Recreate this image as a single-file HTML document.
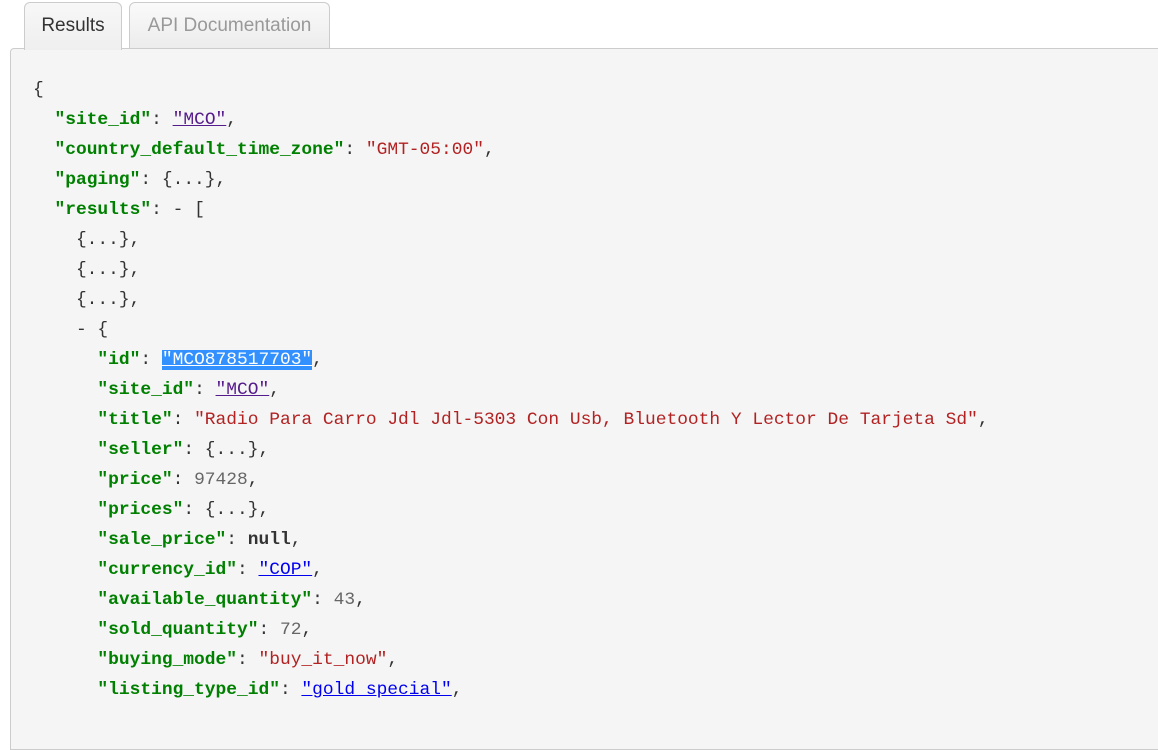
<!DOCTYPE html>
<html><head><meta charset="utf-8"><style>
body{margin:0;background:#fff;width:1158px;height:708px;overflow:hidden;font-family:"Liberation Sans",sans-serif}
.tab{position:absolute;top:2px;height:46px;border:1px solid #ccc;border-bottom:none;border-radius:6px 6px 0 0;font-size:19px;line-height:46px;text-align:center;box-sizing:border-box}
.t1{left:24px;width:98px;background:linear-gradient(#f7f7f7,#efefef);color:#333;z-index:2;height:48px}
.t2{left:129px;width:201px;background:linear-gradient(#fafafa,#ececec);color:#999}
.box{position:absolute;left:10px;top:48px;width:1160px;height:700px;background:#f5f5f5;border:1px solid #ccc;border-radius:4px 0 0 0}
pre{position:absolute;left:33px;top:75px;margin:0;font-family:"Liberation Mono",monospace;font-size:17.9px;line-height:30px;color:#333}
.k{color:#008000;font-weight:bold}
.s{color:#b22222}
.l{color:#551a8b;text-decoration:underline}
.b{color:#0000ee;text-decoration:underline}
.n{color:#666}
.h{background:#3390ff;color:#fff;text-decoration:underline}
.nl{color:#333;font-weight:bold}
</style></head><body>
<div class="tab t1">Results</div>
<div class="tab t2">API Documentation</div>
<div class="box"></div>
<pre>{
  <span class="k">"site_id"</span>: <span class="l">"MCO"</span>,
  <span class="k">"country_default_time_zone"</span>: <span class="s">"GMT-05:00"</span>,
  <span class="k">"paging"</span>: {...},
  <span class="k">"results"</span>: - [
    {...},
    {...},
    {...},
    - {
      <span class="k">"id"</span>: <span class="h">"MCO878517703"</span>,
      <span class="k">"site_id"</span>: <span class="l">"MCO"</span>,
      <span class="k">"title"</span>: <span class="s">"Radio Para Carro Jdl Jdl-5303 Con Usb, Bluetooth Y Lector De Tarjeta Sd"</span>,
      <span class="k">"seller"</span>: {...},
      <span class="k">"price"</span>: <span class="n">97428</span>,
      <span class="k">"prices"</span>: {...},
      <span class="k">"sale_price"</span>: <span class="nl">null</span>,
      <span class="k">"currency_id"</span>: <span class="b">"COP"</span>,
      <span class="k">"available_quantity"</span>: <span class="n">43</span>,
      <span class="k">"sold_quantity"</span>: <span class="n">72</span>,
      <span class="k">"buying_mode"</span>: <span class="s">"buy_it_now"</span>,
      <span class="k">"listing_type_id"</span>: <span class="b">"gold_special"</span>,
</pre>
</body></html>
